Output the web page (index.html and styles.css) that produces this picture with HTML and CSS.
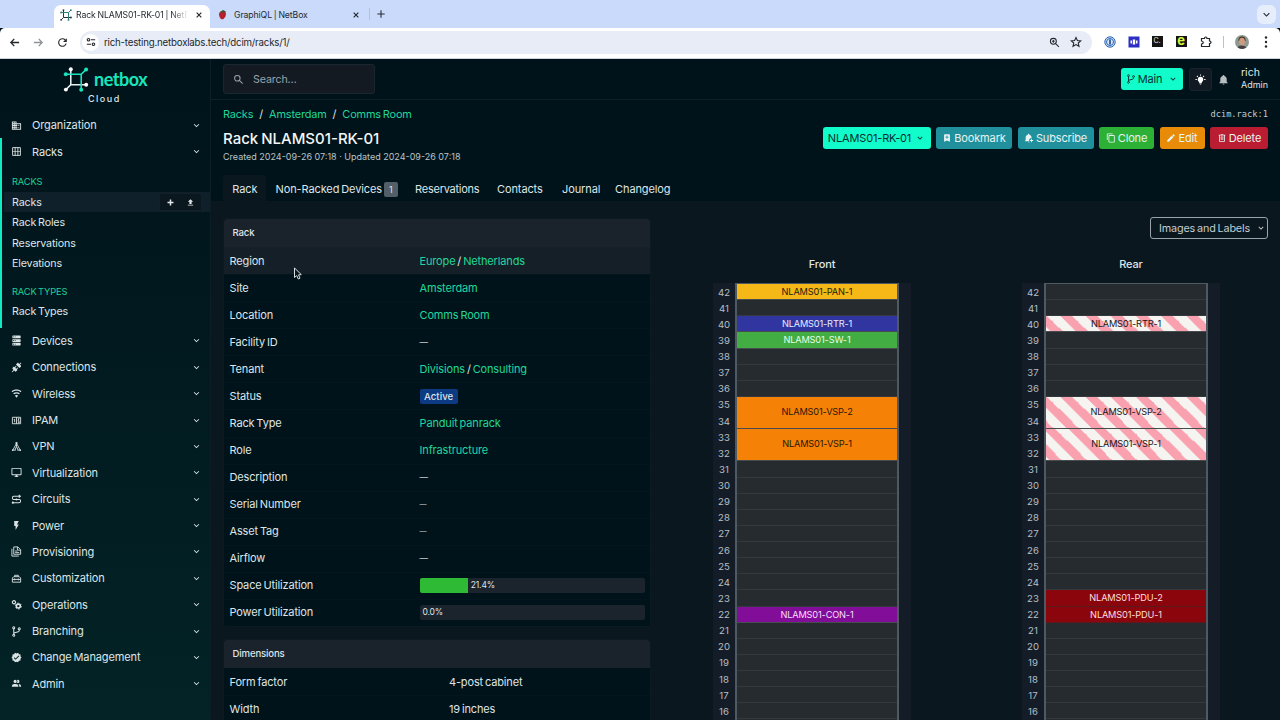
FILE: index.html
```html
<!DOCTYPE html>
<html lang="en">

<head>
    <meta charset="UTF-8">
    <meta name="viewport" content="width=device-width, initial-scale=1.0">
    <title>Rack NLAMS01-RK-01 | NetBox</title>
    <link rel="stylesheet" href="styles.css">
</head>

<body>

    <!-- Icon set -->
    <svg class="icon-defs" width="0" height="0">
        <symbol id="i-domain" viewBox="0 0 24 24"><path d="M18,15H16V17H18M18,11H16V13H18M20,19H12V17H14V15H12V13H14V11H12V9H20M10,7H8V5H10M10,11H8V9H10M10,15H8V13H10M10,19H8V17H10M6,7H4V5H6M6,11H4V9H6M6,15H4V13H6M6,19H4V17H6M12,7V3H2V21H22V7H12Z"/></symbol>
        <symbol id="i-rack" viewBox="0 0 24 24"><path fill="none" stroke="currentColor" stroke-width="2" d="M3.500 3.500H20.500V20.500H3.500ZM9 3V21M15 3V21"/><path fill="none" stroke="currentColor" stroke-width="1.400" d="M3 12H21"/></symbol>
        <symbol id="i-server" viewBox="0 0 24 24"><path d="M4,1H20A1,1 0 0,1 21,2V6A1,1 0 0,1 20,7H4A1,1 0 0,1 3,6V2A1,1 0 0,1 4,1M4,9H20A1,1 0 0,1 21,10V14A1,1 0 0,1 20,15H4A1,1 0 0,1 3,14V10A1,1 0 0,1 4,9M4,17H20A1,1 0 0,1 21,18V22A1,1 0 0,1 20,23H4A1,1 0 0,1 3,22V18A1,1 0 0,1 4,17M9,5H10V3H9V5M9,13H10V11H9V13M9,21H10V19H9V21M5,3V5H7V3H5M5,11V13H7V11H5M5,19V21H7V19H5Z"/></symbol>
        <symbol id="i-connection" viewBox="0 0 24 24"><path d="M21.4 7.5C22.2 8.3 22.2 9.6 21.4 10.3L18.6 13.1L10.8 5.3L13.6 2.5C14.4 1.7 15.7 1.7 16.4 2.5L18.2 4.3L21.2 1.3L22.6 2.7L19.6 5.7L21.4 7.5M15.6 13.3L14.2 11.9L11.4 14.7L9.3 12.6L12.1 9.8L10.7 8.4L7.9 11.2L6.4 9.8L3.6 12.6C2.8 13.4 2.8 14.7 3.6 15.4L5.4 17.2L1.4 21.2L2.8 22.6L6.8 18.6L8.6 20.4C9.4 21.2 10.7 21.2 11.4 20.4L14.2 17.6L12.8 16.2L15.6 13.3Z"/></symbol>
        <symbol id="i-wifi" viewBox="0 0 24 24"><path d="M12,21L15.6,16.2C14.6,15.45 13.35,15 12,15C10.65,15 9.4,15.45 8.4,16.2L12,21M12,3C7.95,3 4.21,4.34 1.2,6.6L3,9C5.5,7.12 8.62,6 12,6C15.38,6 18.5,7.12 21,9L22.8,6.6C19.79,4.34 16.05,3 12,3M12,9C9.3,9 6.81,9.89 4.8,11.4L6.6,13.8C8.1,12.67 9.97,12 12,12C14.03,12 15.9,12.67 17.4,13.8L19.2,11.4C17.19,9.89 14.7,9 12,9Z"/></symbol>
        <symbol id="i-counter" viewBox="0 0 24 24"><path fill="none" stroke="currentColor" stroke-width="2" d="M3 5H21V19H3ZM12 5V19M6 10L8 9V16M15 8H18L15 11.5H18M15 14.5H18V17H15"/></symbol>
        <symbol id="i-graph" viewBox="0 0 24 24"><path fill="none" stroke="currentColor" stroke-width="2" d="M12 5L4 20M12 5L20 20M12 5V12M12 12L8.500 20M12 12L15.500 20"/><circle cx="12" cy="4.500" r="2.500"/><circle cx="4" cy="20" r="2"/><circle cx="20" cy="20" r="2"/><circle cx="8.500" cy="20" r="1.500"/><circle cx="15.500" cy="20" r="1.500"/></symbol>
        <symbol id="i-monitor" viewBox="0 0 24 24"><path d="M21,16H3V4H21M21,2H3C1.89,2 1,2.89 1,4V16A2,2 0 0,0 3,18H10V20H8V22H16V20H14V18H21A2,2 0 0,0 23,16V4C23,2.89 22.1,2 21,2Z"/></symbol>
        <symbol id="i-circuit" viewBox="0 0 24 24"><path fill="none" stroke="currentColor" stroke-width="2.200" d="M20 5H6Q3 5 3 8.500T6 12H18Q21 12 21 15.500T18 19H3M17 2L20.500 5L17 8M7 12H15"/><circle cx="4" cy="19" r="2.400"/><circle cx="12" cy="12" r="2.400"/></symbol>
        <symbol id="i-flash" viewBox="0 0 24 24"><path d="M7,2V13H10V22L17,10H13L17,2H7Z"/></symbol>
        <symbol id="i-docs" viewBox="0 0 24 24"><path fill="none" stroke="currentColor" stroke-width="2" d="M6 2H15L21 8V18H6ZM14 2V9H21M2 6V22H17M9 11H14M9 14.500H18"/></symbol>
        <symbol id="i-toolbox" viewBox="0 0 24 24"><path fill="none" stroke="currentColor" stroke-width="2" d="M3 20V11L6 8H18L21 11V20ZM8 8V5H16V8M3 14H21M8 12V16M16 12V16"/></symbol>
        <symbol id="i-cogs" viewBox="0 0 24 24"><circle cx="6.500" cy="7" r="3.500" fill="none" stroke="currentColor" stroke-width="2.600"/><circle cx="16" cy="15.500" r="4.300" fill="none" stroke="currentColor" stroke-width="3.400"/><circle cx="16" cy="15.500" r="6.500" fill="none" stroke="currentColor" stroke-width="2" stroke-dasharray="3.400 3.400"/></symbol>
        <symbol id="i-branch" viewBox="0 0 24 24"><g fill="none" stroke="currentColor" stroke-width="2.200"><circle cx="6" cy="4" r="2.200"/><circle cx="6" cy="20" r="2.200"/><circle cx="18" cy="6" r="2.200"/><path d="M6 6V18M18 8V10Q18 12 16 12.500L8 14.500Q6 15 6 17"/></g></symbol>
        <symbol id="i-check" viewBox="0 0 24 24"><path d="M23,12L20.56,9.22L20.9,5.54L17.29,4.72L15.4,1.54L12,3L8.6,1.54L6.71,4.72L3.1,5.53L3.44,9.21L1,12L3.44,14.78L3.1,18.47L6.71,19.29L8.6,22.47L12,21L15.4,22.46L17.29,19.28L20.9,18.46L20.56,14.78L23,12M10,17L6,13L7.41,11.59L10,14.17L16.59,7.58L18,9L10,17Z"/></symbol>
        <symbol id="i-users" viewBox="0 0 24 24"><path d="M16 17V19H2V17S2 13 9 13 16 17 16 17M12.5 7.5A3.5 3.5 0 1 0 9 11A3.5 3.5 0 0 0 12.5 7.5M15.94 13A5.32 5.32 0 0 1 18 17V19H22V17S22 13.37 15.94 13M15 4A3.39 3.39 0 0 0 13.07 4.59A5 5 0 0 1 13.07 10.41A3.39 3.39 0 0 0 15 11A3.5 3.5 0 0 0 15 4Z"/></symbol>
        <symbol id="i-chevron" viewBox="0 0 24 24"><path d="M7.41,8.58L12,13.17L16.59,8.58L18,10L12,16L6,10L7.41,8.58Z"/></symbol>
        <symbol id="i-plus" viewBox="0 0 24 24"><path d="M20 14H14V20H10V14H4V10H10V4H14V10H20V14Z"/></symbol>
        <symbol id="i-upload" viewBox="0 0 24 24"><path d="M9,16V10H5L12,3L19,10H15V16H9M5,20V18H19V20H5Z"/></symbol>
        <symbol id="i-search" viewBox="0 0 24 24"><path fill="none" stroke="currentColor" stroke-width="2.200" d="M14.500 14.500L21 21M9.500 3.500A6 6 0 1 1 9.500 15.500A6 6 0 1 1 9.500 3.500"/></symbol>
        <symbol id="i-zoom" viewBox="0 0 24 24"><path fill="none" stroke="currentColor" stroke-width="2.200" d="M14.500 14.500L21.500 21.500M9.500 3A6.500 6.500 0 1 1 9.500 16A6.500 6.500 0 1 1 9.500 3M9.500 6.500V12.500M6.500 9.500H12.500"/></symbol>
        <symbol id="i-bulb" viewBox="0 0 24 24"><path d="M12,6A6,6 0 0,1 18,12C18,14.22 16.79,16.16 15,17.2V19A1,1 0 0,1 14,20H10A1,1 0 0,1 9,19V17.2C7.21,16.16 6,14.22 6,12A6,6 0 0,1 12,6M14,21V22A1,1 0 0,1 13,23H11A1,1 0 0,1 10,22V21H14M20,11H23V13H20V11M1,11H4V13H1V11M13,1V4H11V1H13M4.92,3.5L7.05,5.64L5.63,7.05L3.5,4.93L4.92,3.5M16.95,5.63L19.07,3.5L20.5,4.93L18.37,7.05L16.95,5.63Z"/></symbol>
        <symbol id="i-bell" viewBox="0 0 24 24"><path d="M21,19V20H3V19L5,17V11C5,7.9 7.03,5.17 10,4.29C10,4.19 10,4.1 10,4A2,2 0 0,1 12,2A2,2 0 0,1 14,4C14,4.1 14,4.19 14,4.29C16.97,5.17 19,7.9 19,11V17L21,19M14,21A2,2 0 0,1 12,23A2,2 0 0,1 10,21"/></symbol>
        <symbol id="i-bell-plus" viewBox="0 0 24 24"><path d="M10,21C10,22.100 10.900,23 12,23C12.500,23 13,22.800 13.300,22.500C12.700,21.800 12.300,21 12.100,20H2V19L4,17V11C4,7.900 6,5.200 9,4.300V4A2,2 0 0,1 13,4V4.300C16,5.200 18,7.900 18,11V12.100C14.500,12.500 12.200,15 12,18.500V21ZM17 14H19V17H22V19H19V22H17V19H14V17H17Z"/></symbol>
        <symbol id="i-bookmark" viewBox="0 0 24 24"><path fill-rule="evenodd" d="M17 3H7A2 2 0 0 0 5 5V21L12 18L19 21V5A2 2 0 0 0 17 3M11 6H13V9H16V11H13V14H11V11H8V9H11Z"/></symbol>
        <symbol id="i-copy" viewBox="0 0 24 24"><path d="M19,21H8V7H19M19,5H8A2,2 0 0,0 6,7V21A2,2 0 0,0 8,23H19A2,2 0 0,0 21,21V7A2,2 0 0,0 19,5M16,1H4A2,2 0 0,0 2,3V17H4V3H16V1Z"/></symbol>
        <symbol id="i-pencil" viewBox="0 0 24 24"><path d="M20.71,7.04C21.1,6.65 21.1,6 20.71,5.63L18.37,3.29C18,2.9 17.35,2.9 16.96,3.29L15.12,5.12L18.87,8.87M3,17.25V21H6.75L17.81,9.93L14.06,6.18L3,17.25Z"/></symbol>
        <symbol id="i-trash" viewBox="0 0 24 24"><path d="M9,3V4H4V6H5V19A2,2 0 0,0 7,21H17A2,2 0 0,0 19,19V6H20V4H15V3H9M7,6H17V19H7V6M9,8V17H11V8H9M13,8V17H15V8H13Z"/></symbol>
        <symbol id="i-close" viewBox="0 0 24 24"><path fill="none" stroke="currentColor" stroke-width="3.500" d="M5 5L19 19M19 5L5 19"/></symbol>
        <symbol id="i-add" viewBox="0 0 24 24"><path fill="none" stroke="currentColor" stroke-width="3.200" d="M12 1V23M1 12H23"/></symbol>
        <symbol id="i-back" viewBox="0 0 24 24"><path fill="none" stroke="currentColor" stroke-width="2.800" d="M22 12H5M11.500 4L4 12L11.500 20"/></symbol>
        <symbol id="i-reload" viewBox="0 0 24 24"><path d="M17.650 6.350A8 8 0 1 0 19.730 14H17.650A6 6 0 1 1 12 6C13.660 6 15.140 6.690 16.220 7.780L13 11H20V4Z"/></symbol>
        <symbol id="i-tune" viewBox="0 0 24 24"><g fill="none" stroke="currentColor" stroke-width="2.600"><circle cx="6" cy="6.500" r="3"/><circle cx="18" cy="17.500" r="3"/><path d="M12 6.500H22M2 17.500H12"/></g></symbol>
        <symbol id="i-star" viewBox="0 0 24 24"><path fill="none" stroke="currentColor" stroke-width="2.200" d="M12 3L14.800 9L21.500 9.700L16.500 14L18 20.600L12 17.200L6 20.600L7.500 14L2.500 9.700L9.200 9Z"/></symbol>
        <symbol id="i-puzzle" viewBox="0 0 24 24"><path fill="none" stroke="currentColor" stroke-width="2.400" d="M3 5H9Q9 2 11.500 2T14 5H19V10Q22 10 22 12.500T19 15V21H3V16Q6.500 15.500 6.500 13T3 10Z"/></symbol>
        <symbol id="i-netbox" viewBox="0 0 24 24">
            <g fill="none" class="mark">
                <path class="mark-a" d="M7 2V17M2 22L7 17H22"/>
                <path class="mark-b" d="M2 7H17V22M17 7L22 2"/>
            </g>
            <g class="dot-a"><circle cx="7" cy="2.200" r="1.900"/><circle cx="2.300" cy="21.700" r="1.900"/><circle cx="21.800" cy="17" r="1.900"/></g>
            <g class="dot-b"><circle cx="2.200" cy="7" r="1.900"/><circle cx="17" cy="21.800" r="1.900"/><circle cx="21.700" cy="2.300" r="1.900"/></g>
        </symbol>
    </svg>

    <!-- Browser chrome -->
    <div class="tabstrip">
        <div class="browser-tab active">
            <svg class="favicon dark"><use href="#i-netbox"/></svg>
            <span class="tab-title fade">Rack NLAMS01-RK-01 | NetBox</span>
            <svg class="tab-close"><use href="#i-close"/></svg>
        </div>
        <div class="browser-tab">
            <svg class="favicon" viewBox="0 0 12 12"><path fill="#b5202c" d="M6 2.500C9 1.500 9.500 5 8.500 7.500Q6.500 11 4.500 10.200C2.300 9 1.500 5 2.500 3.500Q4 2 6 2.500Z"/><path fill="#39562c" d="M3 3L6 1L9 2.500L6 3.700Z"/></svg>
            <span class="tab-title">GraphiQL | NetBox</span>
            <svg class="tab-close"><use href="#i-close"/></svg>
        </div>
        <span class="strip-divider"></span>
        <svg class="new-tab"><use href="#i-add"/></svg>
        <span class="tab-search"><svg><use href="#i-chevron"/></svg></span>
    </div>
    <div class="toolbar">
        <svg class="nav-btn"><use href="#i-back"/></svg>
        <svg class="nav-btn forward"><use href="#i-back"/></svg>
        <svg class="nav-btn reload"><use href="#i-reload"/></svg>
        <div class="address">
            <span class="site-info"><svg><use href="#i-tune"/></svg></span>
            <span class="url">rich-testing.netboxlabs.tech/dcim/racks/1/</span>
            <svg class="zoom"><use href="#i-zoom"/></svg>
            <svg class="star"><use href="#i-star"/></svg>
        </div>
        <div class="extensions">
            <svg class="ext" viewBox="0 0 12 12"><circle cx="6" cy="6" r="5.200" fill="#d7e5fa" stroke="#2861b5"/><circle cx="6" cy="6" r="3.500" fill="none" stroke="#2b66b8"/><path stroke="#173d7c" stroke-width="1.500" d="M6 3.500V8.500"/></svg>
            <svg class="ext" viewBox="0 0 12 12"><path fill="#2b2fc4" d="M.5.500H11.500V11.500H.5Z"/><path fill="#fff" d="M4.800 3.500H7.200V8.500H4.800ZM2.500 4.500H4V7.500H2.500ZM8 4.500H9.500V7.500H8Z"/></svg>
            <span class="ext ext-c">C.</span>
            <span class="ext ext-e">e</span>
            <svg class="ext"><use href="#i-puzzle"/></svg>
        </div>
        <span class="strip-divider"></span>
        <svg class="avatar" viewBox="0 0 14 14"><circle cx="7" cy="7" r="7" fill="#8d9a90"/><path fill="#4a3429" d="M3.500 6Q3 1.500 7 1.500T10.500 6Z"/><ellipse cx="7" cy="6.600" rx="2.900" ry="3.900" fill="#cf9a82"/><path fill="#443e42" d="M2.500 12.300Q4 10 7 10.500T11.500 12.300Q7 15.500 2.500 12.300Z"/></svg>
        <svg class="kebab" viewBox="0 0 4 14"><circle cx="2" cy="2.500" r="1.200"/><circle cx="2" cy="7" r="1.200"/><circle cx="2" cy="11.500" r="1.200"/></svg>
    </div>

    <div class="app">
        <aside class="sidebar">
            <div class="brand">
                <div class="brand-row">
                    <svg class="brand-mark"><use href="#i-netbox"/></svg>
                    <span class="brand-name">netbox</span>
                </div>
                <div class="brand-sub">Cloud</div>
            </div>
            <nav>
                <a class="nav-item"><svg><use href="#i-domain"/></svg><span>Organization</span><svg class="chev"><use href="#i-chevron"/></svg></a>
                <div class="nav-open">
                    <a class="nav-item"><svg><use href="#i-rack"/></svg><span>Racks</span><svg class="chev"><use href="#i-chevron"/></svg></a>
                    <div class="submenu">
                        <div class="submenu-title">RACKS</div>
                        <a class="sub-item active">Racks
                            <span class="sub-actions"><svg><use href="#i-plus"/></svg><svg><use href="#i-upload"/></svg></span>
                        </a>
                        <a class="sub-item">Rack Roles</a>
                        <a class="sub-item">Reservations</a>
                        <a class="sub-item">Elevations</a>
                        <div class="submenu-title second">RACK TYPES</div>
                        <a class="sub-item">Rack Types</a>
                    </div>
                </div>
                <a class="nav-item"><svg><use href="#i-server"/></svg><span>Devices</span><svg class="chev"><use href="#i-chevron"/></svg></a>
                <a class="nav-item"><svg><use href="#i-connection"/></svg><span>Connections</span><svg class="chev"><use href="#i-chevron"/></svg></a>
                <a class="nav-item"><svg><use href="#i-wifi"/></svg><span>Wireless</span><svg class="chev"><use href="#i-chevron"/></svg></a>
                <a class="nav-item"><svg><use href="#i-counter"/></svg><span>IPAM</span><svg class="chev"><use href="#i-chevron"/></svg></a>
                <a class="nav-item"><svg><use href="#i-graph"/></svg><span>VPN</span><svg class="chev"><use href="#i-chevron"/></svg></a>
                <a class="nav-item"><svg><use href="#i-monitor"/></svg><span>Virtualization</span><svg class="chev"><use href="#i-chevron"/></svg></a>
                <a class="nav-item"><svg><use href="#i-circuit"/></svg><span>Circuits</span><svg class="chev"><use href="#i-chevron"/></svg></a>
                <a class="nav-item"><svg><use href="#i-flash"/></svg><span>Power</span><svg class="chev"><use href="#i-chevron"/></svg></a>
                <a class="nav-item"><svg><use href="#i-docs"/></svg><span>Provisioning</span><svg class="chev"><use href="#i-chevron"/></svg></a>
                <a class="nav-item"><svg><use href="#i-toolbox"/></svg><span>Customization</span><svg class="chev"><use href="#i-chevron"/></svg></a>
                <a class="nav-item"><svg><use href="#i-cogs"/></svg><span>Operations</span><svg class="chev"><use href="#i-chevron"/></svg></a>
                <a class="nav-item"><svg><use href="#i-branch"/></svg><span>Branching</span><svg class="chev"><use href="#i-chevron"/></svg></a>
                <a class="nav-item"><svg><use href="#i-check"/></svg><span>Change Management</span><svg class="chev"><use href="#i-chevron"/></svg></a>
                <a class="nav-item"><svg><use href="#i-users"/></svg><span>Admin</span><svg class="chev"><use href="#i-chevron"/></svg></a>
            </nav>
        </aside>

        <main>
            <div class="topbar">
                <div class="search"><svg><use href="#i-search"/></svg><span>Search…</span></div>
                <div class="btn btn-main"><svg><use href="#i-branch"/></svg>Main<svg class="caret"><use href="#i-chevron"/></svg></div>
                <div class="theme-btn"><svg><use href="#i-bulb"/></svg></div>
                <svg class="bell"><use href="#i-bell"/></svg>
                <div class="user"><div>rich</div><small>Admin</small></div>
            </div>

            <div class="page-header">
                <div class="crumb-row">
                    <div class="breadcrumb"><a>Racks</a><i>/</i><a>Amsterdam</a><i>/</i><a>Comms Room</a></div>
                    <code>dcim.rack:1</code>
                </div>
                <div class="title-row">
                    <h1>Rack NLAMS01-RK-01</h1>
                    <div class="actions">
                        <div class="btn btn-rack">NLAMS01-RK-01<svg class="caret"><use href="#i-chevron"/></svg></div>
                        <div class="btn btn-bookmark"><svg><use href="#i-bookmark"/></svg>Bookmark</div>
                        <div class="btn btn-subscribe"><svg><use href="#i-bell-plus"/></svg>Subscribe</div>
                        <div class="btn btn-clone"><svg><use href="#i-copy"/></svg>Clone</div>
                        <div class="btn btn-edit"><svg><use href="#i-pencil"/></svg>Edit</div>
                        <div class="btn btn-delete"><svg><use href="#i-trash"/></svg>Delete</div>
                    </div>
                </div>
                <div class="stamps">Created 2024-09-26 07:18 · Updated 2024-09-26 07:18</div>
                <div class="tabs">
                    <a class="tab-rack active">Rack</a>
                    <a class="tab-devices">Non-Racked Devices<span class="count">1</span></a>
                    <a class="tab-reservations">Reservations</a>
                    <a class="tab-contacts">Contacts</a>
                    <a class="tab-journal">Journal</a>
                    <a class="tab-changelog">Changelog</a>
                </div>
            </div>

            <div class="page-body">
                <div class="details">
                    <section class="card">
                        <h2>Rack</h2>
                        <dl>
                            <div class="row hover"><dt>Region</dt><dd><a>Europe</a> / <a>Netherlands</a></dd></div>
                            <div class="row"><dt>Site</dt><dd><a>Amsterdam</a></dd></div>
                            <div class="row"><dt>Location</dt><dd><a>Comms Room</a></dd></div>
                            <div class="row"><dt>Facility ID</dt><dd class="empty">—</dd></div>
                            <div class="row"><dt>Tenant</dt><dd><a>Divisions</a> / <a>Consulting</a></dd></div>
                            <div class="row"><dt>Status</dt><dd><span class="status">Active</span></dd></div>
                            <div class="row"><dt>Rack Type</dt><dd><a>Panduit panrack</a></dd></div>
                            <div class="row"><dt>Role</dt><dd><a>Infrastructure</a></dd></div>
                            <div class="row"><dt>Description</dt><dd class="empty">—</dd></div>
                            <div class="row"><dt>Serial Number</dt><dd class="empty short">—</dd></div>
                            <div class="row"><dt>Asset Tag</dt><dd class="empty short">—</dd></div>
                            <div class="row"><dt>Airflow</dt><dd class="empty">—</dd></div>
                            <div class="row"><dt>Space Utilization</dt><dd><div class="progress"><span class="bar" style="width: 21.4%"></span>21.4%</div></dd></div>
                            <div class="row"><dt>Power Utilization</dt><dd><div class="progress">0.0%</div></dd></div>
                        </dl>
                    </section>
                    <section class="card dimensions">
                        <h2>Dimensions</h2>
                        <dl>
                            <div class="row"><dt>Form factor</dt><dd>4-post cabinet</dd></div>
                            <div class="row"><dt>Width</dt><dd>19 inches</dd></div>
                        </dl>
                    </section>
                </div>

                <div class="elevations">
                    <div class="view-select">Images and Labels<svg><use href="#i-chevron"/></svg></div>
                    <div class="elevation-pair">
                        <div class="elevation">
                            <h3>Front</h3>
                            <div class="rack" id="rack-front"></div>
                        </div>
                        <div class="elevation">
                            <h3>Rear</h3>
                            <div class="rack" id="rack-rear"></div>
                        </div>
                    </div>
                </div>
            </div>
        </main>
    </div>

    <svg class="cursor" viewBox="0 0 10 14"><path d="M1.500 1V10.500L3.700 8.600L5.300 12L7 11.200L5.500 7.900L8.300 7.600Z"/></svg>

    <script src="script.js"></script>
</body>

</html>
```
FILE: styles.css
```css
* {
    box-sizing: border-box;
}

body {
    margin: 0;
    width: 1280px;
    height: 720px;
    overflow: hidden;
    font-family: Inter, "Open Sans", sans-serif;
    font-size: 11px;
    letter-spacing: -0.15px;
    word-spacing: -1px;
    color: #dfe5e8;
    background: #00131a;
}

svg {
    fill: currentColor;
    flex: none;
}

h1, h2, h3, dl, dd {
    margin: 0;
}

.icon-defs {
    display: block;
}

/* Browser chrome */
.tabstrip {
    display: flex;
    align-items: center;
    height: 28px;
    padding-left: 54px;
    background: #c9dafa;
    color: #262a30;
}

.browser-tab {
    display: flex;
    align-items: center;
    width: 156px;
    height: 23px;
    margin-top: 5px;
    padding: 0 7px 4px 6px;
    border-radius: 7px 7px 0 0;
    font-size: 8.700px;
    letter-spacing: -0.1px;
    word-spacing: -0.5px;
}

.browser-tab.active {
    background: #fff;
}

.browser-tab:not(.active) {
    padding-right: 6px;
    padding-left: 7px;
}

.favicon {
    width: 12px;
    height: 12px;
    margin-right: 4px;
}

.browser-tab:not(.active) .favicon {
    margin-right: 5px;
}

.tab-title {
    flex: 1;
    overflow: hidden;
    white-space: nowrap;
}

.fade {
    margin-right: 7px;
    -webkit-mask-image: linear-gradient(90deg, #000 85%, transparent);
    mask-image: linear-gradient(90deg, #000 85%, transparent);
}

.tab-close {
    width: 8px;
    height: 8px;
}

.strip-divider {
    width: 1px;
    height: 12px;
    background: #a9c3ef;
}

.tabstrip .strip-divider {
    margin-left: 3px;
}

.new-tab {
    width: 8px;
    height: 8px;
    margin-left: 7px;
}

.tab-search {
    display: flex;
    justify-content: center;
    align-items: center;
    width: 19px;
    height: 19px;
    margin-left: auto;
    margin-right: 4px;
    border-radius: 6px;
    background: #e6eefc;
}

.tab-search svg {
    width: 13px;
    height: 13px;
}

.toolbar {
    display: flex;
    align-items: center;
    height: 31px;
    padding: 0 12px 2px 9px;
    background: #fff;
    color: #23272c;
    border-radius: 5px 5px 0 0;
    border-bottom: 1px solid #cfd2d6;
}

.nav-btn {
    width: 11px;
    height: 11px;
    margin-right: 13px;
}

.forward {
    margin-right: 12px;
    transform: scaleX(-1);
    color: #8f9296;
}

.reload {
    width: 13px;
    height: 13px;
    margin: 0 11px 0 0;
}

.address {
    display: flex;
    align-items: center;
    width: 1012px;
    height: 23px;
    padding: 0 10px 0 2px;
    border-radius: 12px;
    background: #e8ecf7;
}

.site-info {
    display: flex;
    justify-content: center;
    align-items: center;
    width: 17px;
    height: 17px;
    border-radius: 50%;
    background: #fff;
}

.site-info svg {
    width: 10px;
    height: 10px;
}

.url {
    flex: 1;
    margin-left: 5px;
    font-size: 9.700px;
    letter-spacing: -0.2px;
}

.zoom {
    width: 11px;
    height: 11px;
    margin-right: 10px;
}

.star {
    width: 12px;
    height: 12px;
}

.extensions {
    display: flex;
    gap: 12px;
    margin-left: 11.500px;
}

.ext {
    width: 12px;
    height: 12px;
}

.ext-c,
.ext-e {
    width: 11px;
    height: 11px;
    margin-right: 1px;
    background: #141414;
    color: #eee;
    font-size: 7px;
    line-height: 10px;
    text-align: center;
}

.ext-e {
    color: #d8f43c;
    font-size: 13px;
    font-weight: 700;
    line-height: 8px;
}

.toolbar .strip-divider {
    margin: 0 11px 0 11px;
}

.avatar {
    width: 14px;
    height: 14px;
}

.kebab {
    width: 4px;
    height: 14px;
    margin-left: 15px;
}

/* Sidebar */
.app {
    display: flex;
    height: 661px;
}

.sidebar {
    width: 211px;
    border-right: 1px solid #0c1d26;
    background: linear-gradient(#00131a, #032326);
}

.brand {
    height: 53px;
    padding-top: 8px;
}

.brand-row {
    display: flex;
    align-items: center;
    height: 24px;
    padding-left: 63px;
}

.brand-mark {
    width: 26px;
    height: 25px;
}

.mark { stroke-width: var(--mark-width, 1.5); }
.mark-a { stroke: var(--mark-a, #e8eeee); }
.mark-b { stroke: var(--mark-b, #19e5bc); }
.dot-a { fill: var(--mark-a, #fff); }
.dot-b { fill: var(--mark-b, #19e5bc); }

.dark {
    --mark-width: 2;
    --mark-a: #22343c;
    --mark-b: #2f7f78;
}

.brand-name {
    margin-left: 5px;
    color: #19e5bc;
    font-family: Lato, sans-serif;
    font-size: 18px;
    font-weight: 700;
    letter-spacing: -0.45px;
    line-height: 22px;
}

.brand-sub {
    padding-left: 88px;
    font-size: 9px;
    font-weight: 500;
    letter-spacing: 1.5px;
    line-height: 15px;
}

.nav-item {
    display: flex;
    align-items: center;
    height: 26.380px;
    padding: 0 8px 0 11px;
    font-size: 11px;
    letter-spacing: -0.13px;
    white-space: nowrap;
}

.nav-item svg {
    width: 11px;
    height: 11px;
    color: #dbe4e5;
}

.nav-item span {
    flex: 1;
    margin-left: 10px;
}

.nav-open {
    box-shadow: inset 2px 0 #12eac2;
}

.submenu {
    height: 163px;
    padding-top: 7.500px;
}

.submenu-title {
    height: 19.500px;
    padding-left: 12px;
    color: #21cf98;
    font-size: 9.300px;
    line-height: 19.500px;
}

.submenu-title.second {
    margin-top: 8px;
}

.sub-item {
    display: flex;
    justify-content: space-between;
    align-items: center;
    height: 20.500px;
    margin-left: 4px;
    padding: 0 8px;
    font-size: 10.700px;
}

.sub-item.active {
    background: #10202a;
}

.sub-actions {
    display: flex;
    width: 43px;
    height: 18px;
    align-items: center;
    justify-content: space-around;
    border: 1px solid #142029;
    background: #0b171f;
}

.sub-actions svg {
    width: 9px;
    height: 9px;
}

/* Main column */
main {
    display: flex;
    flex-direction: column;
    width: 1069px;
}

.topbar {
    display: flex;
    align-items: center;
    height: 41px;
    padding: 0 12px;
    border-bottom: 1px solid #0d2028;
}

.search {
    display: flex;
    align-items: center;
    width: 152px;
    height: 30px;
    padding-left: 9px;
    border: 1px solid #1a2730;
    border-radius: 3px;
    background: #131a22;
    color: #99a2a9;
    font-size: 10.700px;
}

.search svg {
    width: 11px;
    height: 11px;
    margin-right: 9px;
}

.btn {
    display: flex;
    align-items: center;
    justify-content: center;
    height: 22px;
    border-radius: 3px;
    color: #e8f3f3;
    font-size: 11px;
    white-space: nowrap;
}

.btn svg {
    width: 10px;
    height: 10px;
    margin-right: 2px;
}

.btn .caret {
    width: 10px;
    height: 10px;
    margin: 0 0 0 4px;
}

.btn-main {
    width: 62px;
    margin-left: auto;
    background: #12fccb;
    color: #03302f;
}

.btn-main .caret {
    margin-left: 6px;
}

.theme-btn {
    display: flex;
    align-items: center;
    justify-content: center;
    width: 23px;
    height: 23px;
    margin-left: 6px;
    border: 1px solid #18232b;
    border-radius: 3px;
    background: #111a22;
    color: #fff;
}

.theme-btn svg,
.bell {
    width: 11px;
    height: 11px;
}

.bell {
    margin: 0 12px 0 6px;
    color: #b6bec3;
}

.user {
    width: 27px;
    font-size: 10.500px;
    line-height: 12px;
    white-space: nowrap;
    letter-spacing: 0;
}

.user small {
    display: block;
    font-size: 9px;
}

.page-header {
    height: 101px;
    padding: 6px 12px 0;
}

.crumb-row {
    display: flex;
    justify-content: space-between;
    align-items: center;
    height: 15px;
}

.breadcrumb {
    font-size: 10.900px;
}

.breadcrumb i {
    margin: 0 6px;
    font-style: normal;
}

.breadcrumb a,
dd a {
    color: #21d79c;
}

code {
    font-family: "DejaVu Sans Mono", monospace;
    font-size: 8.700px;
    letter-spacing: 0;
    color: #c3cacd;
}

.title-row {
    display: flex;
    justify-content: space-between;
    align-items: center;
    height: 22px;
    margin-top: 6px;
}

h1 {
    font-size: 15px;
    font-weight: 500;
    letter-spacing: 0;
    color: #f3f6f6;
}

.actions {
    display: flex;
    gap: 5.500px;
}

.btn-rack {
    width: 108px;
    background: #12fccb;
    color: #03302f;
}

.btn-bookmark,
.btn-subscribe {
    width: 76px;
    background: #20919c;
}

.btn-clone {
    width: 55px;
    background: #2cb136;
}

.btn-edit {
    width: 45px;
    background: #e88b08;
}

.btn-delete {
    width: 58px;
    background: #ba1d31;
}

.stamps {
    margin-top: 1px;
    font-size: 9px;
    letter-spacing: 0;
    word-spacing: 0;
    line-height: 14px;
    color: #bac4c9;
}

.tabs {
    display: flex;
    height: 26px;
    margin-top: 11px;
    font-size: 11px;
    letter-spacing: -0.12px;
}

.tabs a {
    padding-left: 9.300px;
    line-height: 28px;
    white-space: nowrap;
}

.tabs .active {
    background: #0a171f;
    border-radius: 3px 3px 0 0;
}

.tab-rack { width: 43.300px; }
.tab-devices { width: 139.500px; }
.tabs .tab-reservations { width: 82px; letter-spacing: -0.25px; }
.tab-contacts { width: 65px; }
.tab-journal { width: 53px; }
.tab-changelog { width: 74px; }

.count {
    display: inline-block;
    width: 14px;
    height: 15px;
    margin-left: 2px;
    border-radius: 2px;
    background: #525e68;
    font-size: 9px;
    line-height: 15px;
    text-align: center;
}

.page-body {
    display: flex;
    flex: 1;
    min-height: 0;
    padding: 17px 12px 0;
    background: #0a171f;
}

.details {
    width: 428px;
}

.card {
    margin-bottom: 12.500px;
    border: 1px solid #0c1a21;
    border-radius: 3px;
    background: #00131a;
}

h2 {
    height: 28.300px;
    padding-left: 8.500px;
    border-radius: 3px 3px 0 0;
    background: #1a222b;
    font-size: 9.600px;
    font-weight: 500;
    line-height: 28px;
}

.row {
    display: flex;
    align-items: center;
    height: 27.040px;
    padding: 0 5px 0 5.500px;
    font-size: 11px;
}

.row + .row {
    box-shadow: inset 0 1px #03161d;
}

.row.hover {
    background: #141f27;
}

dt {
    width: 190px;
}

dd {
    flex: 1;
}

.dimensions dt {
    width: 219.500px;
}

.dimensions h2 {
    height: 28px;
    line-height: 27px;
}

.empty {
    color: #c2cbcf;
    font-size: 8.500px;
}

.short {
    font-size: 7px;
}

.status {
    display: inline-block;
    height: 15px;
    padding: 0 4.500px;
    border-radius: 2px;
    background: #0c3b84;
    font-size: 9.600px;
    font-weight: 500;
    letter-spacing: 0.05px;
    line-height: 15px;
    vertical-align: middle;
}

.progress {
    display: flex;
    align-items: center;
    height: 15px;
    border-radius: 2px;
    background: #1b232d;
    font-size: 8.500px;
    text-indent: 3px;
    overflow: hidden;
}

.bar {
    height: 100%;
    background: #2eba35;
}

/* Rack elevations */
.elevations {
    display: flex;
    flex-direction: column;
    flex: 1;
}

.view-select {
    display: flex;
    align-items: center;
    justify-content: space-between;
    align-self: flex-end;
    flex: none;
    width: 118px;
    height: 22px;
    margin-top: -1px;
    padding: 0 1px 0 8px;
    border: 1px solid #9aa4aa;
    border-radius: 3px;
    color: #c4ccd1;
    font-size: 10.800px;
    white-space: nowrap;
}

.view-select svg {
    width: 10px;
    height: 10px;
}

.elevation-pair {
    display: flex;
    gap: 111px;
    margin-top: 17px;
    padding-left: 62px;
}

.elevation {
    width: 198px;
}

h3 {
    height: 27px;
    padding-left: 20px;
    font-size: 11px;
    font-weight: 500;
    line-height: 17px;
    text-align: center;
}

.rack {
    display: grid;
    grid-template-columns: 22px 164px 12px;
    background: #141d27;
}

.units {
    padding-top: 1.500px;
    color: #b5bdc4;
    font-size: 9.600px;
    letter-spacing: 0;
    text-align: center;
}

.units div {
    height: 16.130px;
    line-height: 16.130px;
}

.slots {
    display: flex;
    flex-direction: column;
    border: 2px solid #4f5962;
    border-top-width: 1px;
    border-bottom: 0;
    background: #262b2f;
}

.slot {
    flex: none;
    height: 16.130px;
    border-bottom: 1px solid #34393d;
    font-size: 9.200px;
    line-height: 15px;
    text-align: center;
}

.slot.tall {
    height: 32.260px;
    line-height: 30px;
}

.device {
    border-color: #474c4e;
}

.yellow { background: #f5b817; color: #231d08; }
.blue { background: #3035a0; color: #e9ebff; }
.green { background: #42ad43; color: #e8ffe8; }
.orange { background: #f58207; color: #2a1703; }
.purple { background: #820d98; color: #f8dfff; }
.red { background: #8b060c; color: #ffdfdf; border-color: #5c181c; }

/* Back side of devices mounted on the opposite face */
.blocked {
    background-color: #f5f4f1;
    background-image: linear-gradient(45deg, #f9a1af 25%, #f5f4f1 25%, #f5f4f1 50%, #f9a1af 50%, #f9a1af 75%, #f5f4f1 75%);
    background-size: 25.200px 25.200px;
    color: #191919;
}

.shift-a { background-position: 14px 0; }
.shift-b { background-position: -3px 0; }

.cursor {
    position: absolute;
    left: 293px;
    top: 267px;
    width: 10px;
    height: 14px;
    fill: #0c161c;
    stroke: #d9dfe2;
    stroke-width: 1;
}
```
FILE: script.js
```js
const FRONT = {
    42: { name: 'NLAMS01-PAN-1', style: 'yellow' },
    40: { name: 'NLAMS01-RTR-1', style: 'blue' },
    39: { name: 'NLAMS01-SW-1', style: 'green' },
    35: { name: 'NLAMS01-VSP-2', style: 'orange', height: 2 },
    33: { name: 'NLAMS01-VSP-1', style: 'orange', height: 2 },
    22: { name: 'NLAMS01-CON-1', style: 'purple' }
};

const REAR = {
    40: { name: 'NLAMS01-RTR-1', style: 'blocked shift-a' },
    35: { name: 'NLAMS01-VSP-2', style: 'blocked shift-a', height: 2 },
    33: { name: 'NLAMS01-VSP-1', style: 'blocked shift-b', height: 2 },
    23: { name: 'NLAMS01-PDU-2', style: 'red' },
    22: { name: 'NLAMS01-PDU-1', style: 'red' }
};

const TOP_UNIT = 42;
const LAST_UNIT = 16;

function drawRack(id, devices) {
    let units = '';
    let slots = '';
    for (let u = TOP_UNIT; u >= LAST_UNIT; u--) {
        units += `<div>${u}</div>`;
    }
    for (let u = TOP_UNIT; u >= LAST_UNIT;) {
        const device = devices[u];
        if (device) {
            const tall = device.height === 2 ? ' tall' : '';
            slots += `<div class="slot device ${device.style}${tall}">${device.name}</div>`;
            u -= device.height || 1;
        } else {
            slots += '<div class="slot"></div>';
            u--;
        }
    }
    document.getElementById(id).innerHTML =
        `<div class="units">${units}</div><div class="slots">${slots}</div>`;
}

drawRack('rack-front', FRONT);
drawRack('rack-rear', REAR);
```
